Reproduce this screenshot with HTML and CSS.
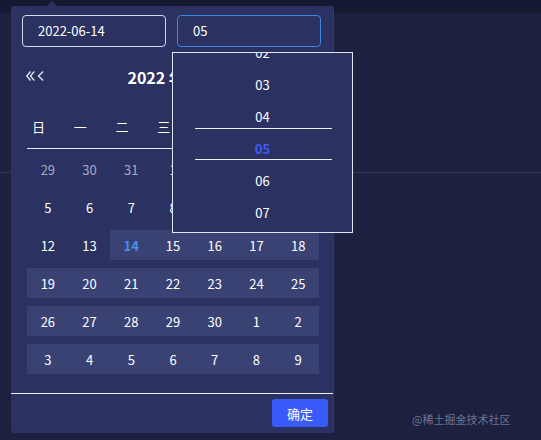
FILE: index.html
```html
<!DOCTYPE html>
<html>
<head>
<meta charset="utf-8">
<link rel="stylesheet" href="styles.css">
</head>
<body>
<div class="page">
  <div class="topbar"></div>
  <div class="content"></div>
  <div class="watermark">@稀土掘金技术社区</div>
</div>

<div class="picker">
  <div class="arrow"></div>
  <div class="inputs">
    <div class="input">2022-06-14</div>
    <div class="input active">05</div>
  </div>
  <div class="header">
    <svg class="nav" width="20" height="10" viewBox="0 0 20 10"><path d="M4.5 0.5 L0.8 5 L4.5 9.5 M8.2 0.5 L4.5 5 L8.2 9.5 M17.2 0.5 L12.5 5 L17.2 9.5" fill="none" stroke="#e6e8f2" stroke-width="1.3"/></svg>
    <div class="title">2022 年 6 月</div>
    <svg class="nav" width="20" height="10" viewBox="0 0 20 10"><path d="M2.8 0.5 L7.5 5 L2.8 9.5 M11.8 0.5 L15.5 5 L11.8 9.5 M15.5 0.5 L19.2 5 L15.5 9.5" fill="none" stroke="#e6e8f2" stroke-width="1.3"/></svg>
  </div>
  <div class="weekdays">
    <span>日</span><span>一</span><span>二</span><span>三</span><span>四</span><span>五</span><span>六</span>
  </div>
  <div class="rows">
    <div class="row">
      <span class="muted">29</span><span class="muted">30</span><span class="muted">31</span><span>1</span><span>2</span><span>3</span><span>4</span>
    </div>
    <div class="row">
      <span>5</span><span>6</span><span>7</span><span>8</span><span>9</span><span>10</span><span>11</span>
    </div>
    <div class="row">
      <span>12</span><span>13</span><span class="today in">14</span><span class="in">15</span><span class="in">16</span><span class="in">17</span><span class="in">18</span>
    </div>
    <div class="row">
      <span class="in">19</span><span class="in">20</span><span class="in">21</span><span class="in">22</span><span class="in">23</span><span class="in">24</span><span class="in">25</span>
    </div>
    <div class="row">
      <span class="in">26</span><span class="in">27</span><span class="in">28</span><span class="in">29</span><span class="in">30</span><span class="in">1</span><span class="in">2</span>
    </div>
    <div class="row">
      <span class="in">3</span><span class="in">4</span><span class="in">5</span><span class="in">6</span><span class="in">7</span><span class="in">8</span><span class="in">9</span>
    </div>
  </div>
  <div class="footer">
    <button class="ok">确定</button>
  </div>
</div>

<div class="dropdown">
  <div class="list">
    <div class="item">02</div>
    <div class="item">03</div>
    <div class="item">04</div>
    <div class="item selected">05</div>
    <div class="item">06</div>
    <div class="item">07</div>
    <div class="item">08</div>
  </div>
  <div class="selline top"></div>
  <div class="selline bottom"></div>
</div>
</body>
</html>
```

FILE: styles.css
```css
* { box-sizing: border-box; }
html, body {
  margin: 0;
  padding: 0;
  background: #1d2140;
  font-family: "Noto Sans CJK SC", "Noto Sans", sans-serif;
  color: #fff;
}
.page {
  width: 541px;
  height: 440px;
  position: relative;
  overflow: hidden;
}
.topbar {
  height: 13px;
  background: #141830;
}
.content {
  height: 160px;
  border-bottom: 1px solid #353a5a;
}
.watermark {
  position: absolute;
  left: 412px;
  top: 410px;
  font-size: 11px;
  color: #6f748e;
  line-height: 18px;
}
.picker {
  position: absolute;
  left: 11px;
  top: 6px;
  width: 322px;
  height: 427px;
  background: #2b3261;
  border-radius: 3px;
  box-shadow: 1px 0 0 #333a6a;
}
.arrow {
  position: absolute;
  left: 35px;
  top: -5px;
  width: 0;
  height: 0;
  border-left: 6px solid transparent;
  border-right: 6px solid transparent;
  border-bottom: 6px solid #2b3261;
}
.inputs {
  display: flex;
  gap: 11px;
  padding: 9px 0 0 11px;
}
.input {
  width: 144px;
  height: 32px;
  border: 1px solid #d6d9ea;
  border-radius: 4px;
  font-size: 13px;
  line-height: 30px;
  padding-left: 15px;
  color: #fff;
}
.input.active {
  border-color: #3f85dc;
}
.header {
  display: flex;
  justify-content: space-between;
  align-items: center;
  margin: 15px 14px 0 15px;
  height: 30px;
}
.nav {
  display: block;
  margin-top: -3px;
}
.title {
  font-size: 16px;
  font-weight: bold;
}
.weekdays {
  display: grid;
  grid-template-columns: repeat(7, 1fr);
  margin: 27px 14px 0 16px;
  width: 292px;
  height: 30px;
  border-bottom: 1px solid #e8eaf4;
  font-size: 13px;
  line-height: 16px;
}
.weekdays span {
  text-align: left;
  padding-left: 5px;
}
.rows {
  display: flex;
  flex-direction: column;
  gap: 8px;
  margin: 5px 0 0 16px;
  width: 292px;
}
.row {
  display: grid;
  grid-template-columns: repeat(7, 1fr);
  height: 30px;
}
.row span {
  display: flex;
  align-items: center;
  justify-content: center;
  font-size: 13px;
  color: #fff;
}
.row span.muted { color: #a6aac6; }
.row span.in { background: #3a4273; }
.row span.today { color: #4a90ee; font-weight: bold; }
.footer {
  margin-top: 19px;
  border-top: 1.5px solid #eef0f8;
  display: flex;
  justify-content: flex-end;
  padding: 5px 5px 0 0;
}
.ok {
  width: 56px;
  height: 28px;
  border: none;
  border-radius: 3px;
  background: #3a5bfb;
  color: #fff;
  font-family: "Noto Sans CJK SC", sans-serif;
  font-size: 13px;
  padding: 0;
}
.dropdown {
  position: absolute;
  left: 172px;
  top: 52px;
  width: 181px;
  height: 181px;
  background: #2b3261;
  border: 1px solid #e3e6f2;
  overflow: hidden;
}
.list {
  margin-top: -16px;
}
.item {
  height: 32px;
  line-height: 32px;
  text-align: center;
  font-size: 13px;
  color: #fff;
}
.item.selected {
  color: #3e5cf5;
  font-weight: bold;
}
.selline {
  position: absolute;
  left: 22px;
  width: 137px;
  height: 1px;
  background: #eef0f8;
}
.selline.top { top: 75px; }
.selline.bottom { top: 106px; }
```
